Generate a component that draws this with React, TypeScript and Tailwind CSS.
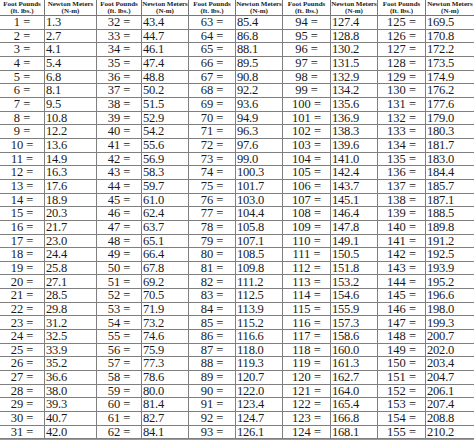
const nm: string[][] = [
  "1.3 2.7 4.1 5.4 6.8 8.1 9.5 10.8 12.2 13.6 14.9 16.3 17.6 18.9 20.3 21.7 23.0 24.4 25.8 27.1 28.5 29.8 31.2 32.5 33.9 35.2 36.6 38.0 39.3 40.7 42.0".split(" "),
  "43.4 44.7 46.1 47.4 48.8 50.2 51.5 52.9 54.2 55.6 56.9 58.3 59.7 61.0 62.4 63.7 65.1 66.4 67.8 69.2 70.5 71.9 73.2 74.6 75.9 77.3 78.6 80.0 81.4 82.7 84.1".split(" "),
  "85.4 86.8 88.1 89.5 90.8 92.2 93.6 94.9 96.3 97.6 99.0 100.3 101.7 103.0 104.4 105.8 107.1 108.5 109.8 111.2 112.5 113.9 115.2 116.6 118.0 119.3 120.7 122.0 123.4 124.7 126.1".split(" "),
  "127.4 128.8 130.2 131.5 132.9 134.2 135.6 136.9 138.3 139.6 141.0 142.4 143.7 145.1 146.4 147.8 149.1 150.5 151.8 153.2 154.6 155.9 157.3 158.6 160.0 161.3 162.7 164.0 165.4 166.8 168.1".split(" "),
  "169.5 170.8 172.2 173.5 174.9 176.2 177.6 179.0 180.3 181.7 183.0 184.4 185.7 187.1 188.5 189.8 191.2 192.5 193.9 195.2 196.6 198.0 199.3 200.7 202.0 203.4 204.7 206.1 207.4 208.8 210.2".split(" "),
];

const rows = Array.from({ length: 31 }, (_, i) => i);
const pairs = [0, 1, 2, 3, 4];

const App = () => {
  return (
    <div className="w-[474px] h-[442px] bg-white overflow-hidden font-['Liberation_Serif','Times_New_Roman',serif] text-[#1a1a1a]">
      <div className="grid grid-cols-[45px_52px_45px_47px_47px_47px_48px_47px_48px_48px] grid-rows-[16px_repeat(31,13.67px)] border-b border-[#9a9a9a]">
        {/* header */}
        {pairs.map((p) => (
          <div key={"h" + p} className="contents">
            <div className="flex flex-col items-center justify-center border-r border-b border-[#777] text-[7px] font-bold leading-[7px]">
              <span>Foot Pounds</span>
              <span>(ft. lbs.)</span>
            </div>
            <div
              className={
                "flex flex-col items-center justify-center border-b border-[#777] text-[7px] font-bold leading-[7px] " +
                (p < 4 ? "border-r" : "")
              }
            >
              <span>Newton Meters</span>
              <span>(N-m)</span>
            </div>
          </div>
        ))}
        {/* rows */}
        {rows.map((r) =>
          pairs.map((p) => (
            <div key={r + "-" + p} className="contents">
              <div className="flex items-center justify-center border-r border-b border-[#7f7f7f] text-[12.5px] leading-none">
                {p * 31 + r + 1} =
              </div>
              <div
                className={
                  "flex items-center pl-[1px] border-b border-[#7f7f7f] text-[12.5px] leading-none tracking-[-0.2px] " +
                  (p < 4 ? "border-r" : "")
                }
              >
                {nm[p][r]}
              </div>
            </div>
          ))
        )}
      </div>
    </div>
  );
};

export default App;
